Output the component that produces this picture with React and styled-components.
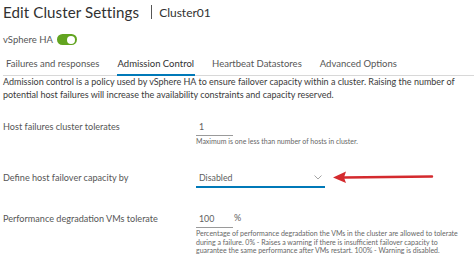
import React from "react"
import styled, { createGlobalStyle } from "styled-components"

const GlobalStyle = createGlobalStyle`
  html, body {
    margin: 0;
    padding: 0;
    background: #ffffff;
  }
  body {
    font-family: "Lato", "Noto Sans", sans-serif;
    color: #565656;
  }
`

const Page = styled.div`
  width: 474px;
  height: 255px;
  overflow: hidden;
  padding: 0 0 0 3px;
  box-sizing: border-box;
`

const Header = styled.div`
  display: flex;
  align-items: center;
  height: 24px;
`

const Title = styled.h1`
  margin: 0;
  font-size: 15.1px;
  font-weight: 400;
  color: #313131;
  letter-spacing: 0.1px;
`

const Separator = styled.span`
  width: 1px;
  height: 14px;
  background: #565656;
  margin: 0 7px 0 12px;
`

const SubTitle = styled.span`
  font-size: 12px;
  color: #313131;
`

const HaRow = styled.div`
  display: flex;
  align-items: center;
  gap: 4px;
  margin-top: 10px;
  font-size: 9.5px;
`

const Toggle = styled.span`
  position: relative;
  width: 20px;
  height: 11px;
  border-radius: 6px;
  background: ${(p) => (p.on ? "#62a420" : "#bbbbbb")};

  &::after {
    content: "";
    position: absolute;
    top: 1.5px;
    left: ${(p) => (p.on ? "10.5px" : "1.5px")};
    width: 8px;
    height: 8px;
    border-radius: 50%;
    background: #ffffff;
  }
`

const Tabs = styled.div`
  display: flex;
  gap: 16px;
  margin-top: 9px;
  padding-left: 2px;
  border-bottom: 1px solid #d8d8d8;
`

const Tab = styled.div`
  font-size: 9.5px;
  padding: 4px 1px 5px;
  color: ${(p) => (p.active ? "#313131" : "#565656")};
  border-bottom: 2px solid ${(p) => (p.active ? "#0079b8" : "transparent")};
  margin-bottom: -1px;
`

const Description = styled.p`
  margin: 0;
  font-size: 9px;
  line-height: 12.5px;
  color: #3a3a3a;
`

const FormRow = styled.div`
  display: grid;
  grid-template-columns: 193px 1fr;
  margin-top: ${(p) => p.top}px;
`

const Label = styled.div`
  font-size: 9.1px;
  line-height: 14px;
  padding-top: 1px;
  color: #565656;
`

const Field = styled.div`
  display: flex;
  flex-direction: column;
`

const InputLine = styled.div`
  display: flex;
  align-items: center;
`

const Input = styled.div`
  width: ${(p) => p.w}px;
  box-sizing: border-box;
  padding: 2px 3px 2px;
  font-size: 8.8px;
  line-height: 12px;
  color: #5e5e5e;
  border-bottom: 1px solid ${(p) => (p.focus ? "#0079b8" : "#9a9a9a")};
  ${(p) => p.focus && "border-bottom-width: 2px;"}
  display: flex;
  justify-content: space-between;
  align-items: center;
`

const Unit = styled.span`
  font-size: 9px;
  margin-left: 1px;
  margin-top: -3px;
  color: #5e5e5e;
`

const Hint = styled.div`
  font-size: 7px;
  line-height: 8.8px;
  margin-top: 1px;
  color: #666666;
  max-width: 272px;
`

const Chevron = () => (
  <svg width="8" height="5" viewBox="0 0 8 5">
    <path d="M0.5 0.5 L4 4 L7.5 0.5" fill="none" stroke="#9a9a9a" strokeWidth="0.9" />
  </svg>
)

const Arrow = () => (
  <svg width="104" height="14" viewBox="0 0 104 14" style={{ marginLeft: 7, marginTop: -4 }}>
    <path d="M12 7.5 L100 6.5" stroke="#d42a2e" strokeWidth="2.4" strokeLinecap="round" />
    <path d="M1 7.5 L14 1.5 L12 7.5 L14 13 Z" fill="#d42a2e" />
  </svg>
)

export default function App() {
  return (
    <>
      <GlobalStyle />
      <Page>
        <Header>
          <Title>Edit Cluster Settings</Title>
          <Separator />
          <SubTitle>Cluster01</SubTitle>
        </Header>
        <HaRow>
          vSphere HA <Toggle on />
        </HaRow>
        <Tabs>
          <Tab>Failures and responses</Tab>
          <Tab active>Admission Control</Tab>
          <Tab>Heartbeat Datastores</Tab>
          <Tab>Advanced Options</Tab>
        </Tabs>
        <Description>
          Admission control is a policy used by vSphere HA to ensure failover capacity within a cluster. Raising the number of potential host failures will increase the availability constraints and capacity reserved.
        </Description>
        <FormRow top={18}>
          <Label>Host failures cluster tolerates</Label>
          <Field>
            <Input w={37}>1</Input>
            <Hint>Maximum is one less than number of hosts in cluster.</Hint>
          </Field>
        </FormRow>
        <FormRow top={24}>
          <Label>Define host failover capacity by</Label>
          <Field>
            <InputLine>
              <Input w={129} focus>
                Disabled
                <Chevron />
              </Input>
              <Arrow />
            </InputLine>
          </Field>
        </FormRow>
        <FormRow top={23}>
          <Label>Performance degradation VMs tolerate</Label>
          <Field>
            <InputLine>
              <Input w={37}>100</Input>
              <Unit>%</Unit>
            </InputLine>
            <Hint>
              Percentage of performance degradation the VMs in the cluster are allowed to tolerate during a failure. 0% - Raises a warning if there is insufficient failover capacity to guarantee the same performance after VMs restart. 100% - Warning is disabled.
            </Hint>
          </Field>
        </FormRow>
      </Page>
    </>
  )
}
